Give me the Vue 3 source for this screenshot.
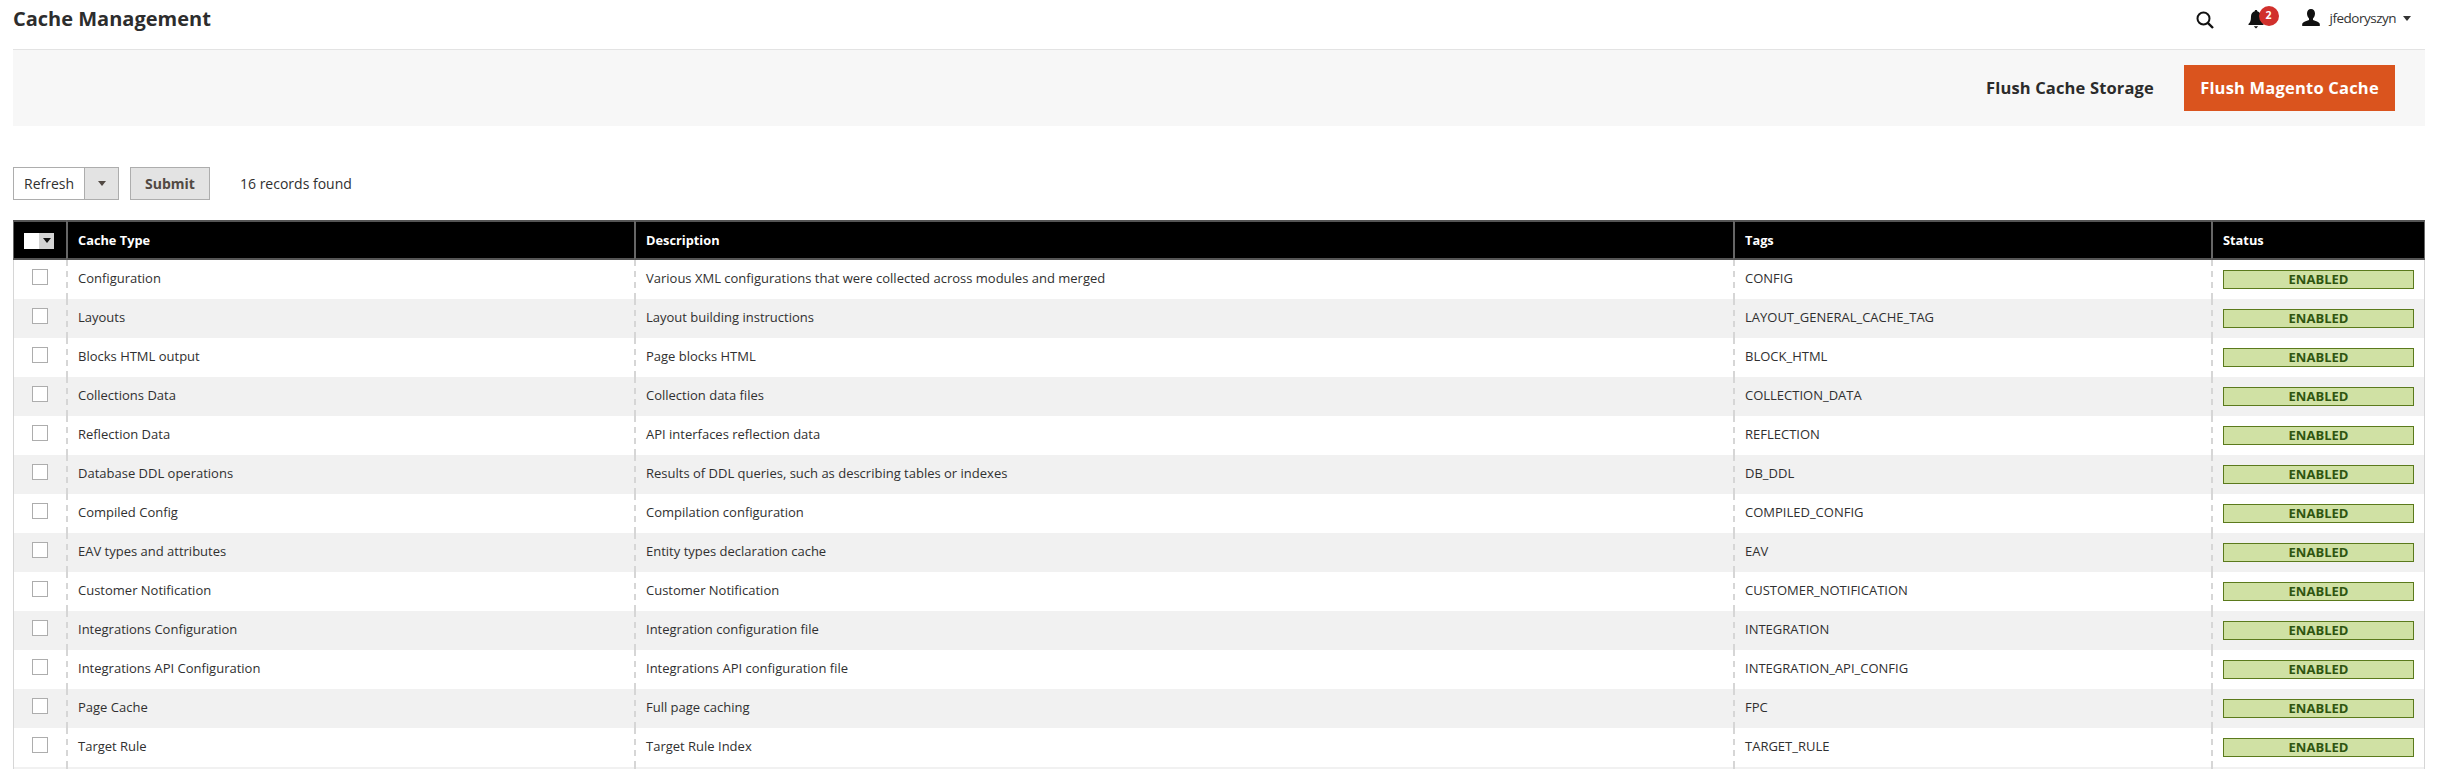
<script setup>
const rows = [
  ['Configuration', 'Various XML configurations that were collected across modules and merged', 'CONFIG'],
  ['Layouts', 'Layout building instructions', 'LAYOUT_GENERAL_CACHE_TAG'],
  ['Blocks HTML output', 'Page blocks HTML', 'BLOCK_HTML'],
  ['Collections Data', 'Collection data files', 'COLLECTION_DATA'],
  ['Reflection Data', 'API interfaces reflection data', 'REFLECTION'],
  ['Database DDL operations', 'Results of DDL queries, such as describing tables or indexes', 'DB_DDL'],
  ['Compiled Config', 'Compilation configuration', 'COMPILED_CONFIG'],
  ['EAV types and attributes', 'Entity types declaration cache', 'EAV'],
  ['Customer Notification', 'Customer Notification', 'CUSTOMER_NOTIFICATION'],
  ['Integrations Configuration', 'Integration configuration file', 'INTEGRATION'],
  ['Integrations API Configuration', 'Integrations API configuration file', 'INTEGRATION_API_CONFIG'],
  ['Page Cache', 'Full page caching', 'FPC'],
  ['Target Rule', 'Target Rule Index', 'TARGET_RULE'],
]
</script>

<template>
  <div class="page">
    <header class="top">
      <h1 class="title">Cache Management</h1>
      <div class="tools">
        <svg class="search" viewBox="0 0 18 18" width="18" height="18">
          <circle cx="7.5" cy="7.5" r="6" fill="none" stroke="#111" stroke-width="2" />
          <path d="M11.8 11.8L17 17" stroke="#111" stroke-width="2.4" fill="none" />
        </svg>
        <div class="bell">
          <svg viewBox="0 0 16 20" width="16" height="20">
            <path d="M8 1c-.8 0-1.300.5-1.300 1.300C4.300 3 3 5 3 7.500c0 4-.8 6-2.500 7.500v1h15v-1C13.800 13.500 13 11.500 13 7.500 13 5 11.700 3 9.300 2.300 9.300 1.500 8.800 1 8 1z" fill="#111" />
            <path d="M5.800 17.300h4.400L8 19.500z" fill="#111" />
          </svg>
          <span class="count">2</span>
        </div>
        <div class="user">
          <svg viewBox="0 0 18 18" width="18" height="18">
            <path d="M9 0c2.500 0 4 1.900 4 4.400 0 2.200-1 4-2 5v1.600c2.500.8 6 1.900 6.800 3.700V17H.2v-2.300C1 12.900 4.500 11.800 7 11V9.400c-1-1-2-2.800-2-5C5 1.900 6.500 0 9 0z" fill="#111" />
          </svg>
          <span class="name">jfedoryszyn</span>
          <i class="caret"></i>
        </div>
      </div>
    </header>

    <div class="actions">
      <button class="link-btn">Flush Cache Storage</button>
      <button class="primary-btn">Flush Magento Cache</button>
    </div>

    <div class="toolbar">
      <div class="select">
        <span class="select-label">Refresh</span>
        <span class="select-arrow"><i class="caret small"></i></span>
      </div>
      <button class="submit">Submit</button>
      <span class="found">16 records found</span>
    </div>

    <table class="grid">
      <colgroup>
        <col class="c1" />
        <col class="c2" />
        <col class="c3" />
        <col class="c4" />
        <col class="c5" />
      </colgroup>
      <thead>
        <tr>
          <th>
            <div class="mass"><span class="mass-box"></span><span class="mass-arrow"><i class="caret dark"></i></span></div>
          </th>
          <th>Cache Type</th>
          <th>Description</th>
          <th>Tags</th>
          <th>Status</th>
        </tr>
      </thead>
      <tbody>
        <tr v-for="row in rows" :key="row[2]">
          <td class="check"><span class="box"></span></td>
          <td class="text">{{ row[0] }}</td>
          <td class="text">{{ row[1] }}</td>
          <td class="text">{{ row[2] }}</td>
          <td><div class="enabled">ENABLED</div></td>
        </tr>
        <tr class="tail"><td></td><td></td><td></td><td></td><td></td></tr>
      </tbody>
    </table>
  </div>
</template>

<style>
html, body { margin: 0; background: #fff; overflow: hidden; }
</style>

<style scoped>
.page {
  box-sizing: border-box;
  height: 769px;
  overflow: hidden;
  padding: 0 14px 0 13px;
  font-family: "Open Sans", sans-serif;
  color: #303030;
  font-size: 13px;
}
.top {
  height: 49px;
  display: flex;
  justify-content: space-between;
  align-items: flex-start;
}
.title {
  margin: 0;
  padding-top: 2px;
  font-size: 20px;
  line-height: 33px;
  font-weight: 700;
  color: #2d2d2d;
}
.tools {
  display: flex;
  align-items: center;
  height: 36px;
  margin-right: 14px;
}
.search { margin-right: 34px; margin-top: 3px; }
.bell { position: relative; width: 16px; height: 20px; margin-right: 38px; margin-top: 2px; }
.count {
  position: absolute;
  left: 11px;
  top: -3px;
  width: 20px;
  height: 20px;
  border-radius: 50%;
  background: #d1302c;
  color: #fff;
  font-size: 10.5px;
  font-weight: 700;
  line-height: 19px;
  text-align: center;
}
.user { display: flex; align-items: center; }
.name { margin-left: 10px; font-size: 13.500px; letter-spacing: -.5px; color: #333; }
.caret {
  display: block;
  width: 0;
  height: 0;
  margin-left: 7px;
  border-left: 4px solid transparent;
  border-right: 4px solid transparent;
  border-top: 5px solid #333;
}
.caret.small { margin: 0; border-top-color: #514943; }
.caret.dark { margin: 0; border-top-color: #111; }

.actions {
  height: 76px;
  border-top: 1px solid #e3e3e3;
  background: #f7f7f7;
  display: flex;
  justify-content: flex-end;
  align-items: center;
  padding-right: 30px;
}
.link-btn {
  border: 0;
  background: none;
  padding: 0 0 2px;
  margin-right: 30px;
  font: 700 16.500px "Open Sans", sans-serif;
  letter-spacing: .15px;
  color: #2b2b2b;
}
.primary-btn {
  width: 211px;
  height: 46px;
  border: 0;
  background: #da541e;
  color: #fff;
  padding: 0 0 2px;
  font: 700 16.500px "Open Sans", sans-serif;
  letter-spacing: .2px;
}

.toolbar {
  margin-top: 41px;
  height: 33px;
  display: flex;
  align-items: center;
}
.select {
  box-sizing: border-box;
  width: 106px;
  height: 33px;
  border: 1px solid #adadad;
  display: flex;
}
.select-label {
  flex: 1;
  padding-left: 10px;
  line-height: 31px;
  font-size: 14px;
  color: #303030;
}
.select-arrow {
  width: 33px;
  background: #e3e3e3;
  border-left: 1px solid #adadad;
  display: flex;
  align-items: center;
  justify-content: center;
}
.submit {
  box-sizing: border-box;
  width: 80px;
  height: 33px;
  margin-left: 11px;
  border: 1px solid #adadad;
  background: #e3e3e3;
  color: #514943;
  padding: 0;
  font: 700 14px "Open Sans", sans-serif;
}
.found { margin-left: 30px; font-size: 14px; color: #303030; }

.grid {
  margin-top: 20px;
  width: 100%;
  table-layout: fixed;
  border-collapse: separate;
  border-spacing: 0;
}
.c1 { width: 53px; }
.c2 { width: 568px; }
.c3 { width: 1099px; }
.c4 { width: 478px; }
th {
  height: 40px;
  box-sizing: border-box;
  background: #000;
  color: #fff;
  text-align: left;
  padding: 0 10px;
  font-size: 12.800px;
  font-weight: 700;
  border-top: 2px solid #555;
  border-bottom: 2px solid #555;
  border-left: 2px solid #666;
}
th:first-child { border-left: 1px solid #666; padding: 0 0 0 10px; }
th:last-child { border-right: 1px solid #666; }
td {
  height: 39px;
  box-sizing: border-box;
  padding: 0 10px;
  border-left: 2px dashed #d6d6d6;
  color: #303030;
  font-size: 13px;
  white-space: nowrap;
}
td.text { padding-bottom: 4px; }
td:first-child { border-left: 1px solid #d6d6d6; }
td:last-child { border-right: 1px solid #d6d6d6; }
tbody tr:nth-child(even) td { background: #f1f1f1; }
td.check { padding: 0 0 0 18px; }
.box {
  display: block;
  box-sizing: border-box;
  width: 16px;
  height: 16px;
  margin-top: -5px;
  border: 1px solid #adadad;
  background: #fff;
}
.mass { display: flex; width: 30px; height: 16px; margin-top: 1px; }
.mass-box { width: 15px; background: #fff; }
.mass-arrow {
  width: 15px;
  background: #d4d4d4;
  display: flex;
  align-items: center;
  justify-content: center;
}
.enabled {
  box-sizing: border-box;
  height: 19px;
  border: 1px solid #5b7a1c;
  background: #d0e1a4;
  color: #2f5510;
  font-size: 13px;
  font-weight: 700;
  line-height: 17px;
  text-align: center;
}
.tail td { height: 39px; }
</style>
